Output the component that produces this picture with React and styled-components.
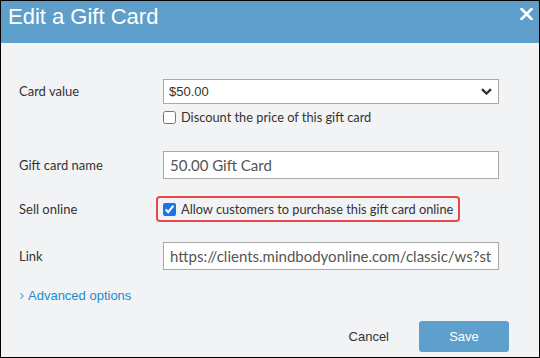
import React from 'react'
import styled, { createGlobalStyle } from 'styled-components'

const GlobalStyle = createGlobalStyle`
  * { box-sizing: border-box; }
  body {
    margin: 0;
    background: #fff;
    font-family: Lato, "Liberation Sans", sans-serif;
  }
`

const Dialog = styled.div`
  width: 540px;
  height: 358px;
  border: 1px solid #000;
  background: #f2f3f5;
  display: flex;
  flex-direction: column;
`

const Header = styled.div`
  height: 42px;
  background: #5e9ecb;
  display: flex;
  justify-content: space-between;
  align-items: flex-start;
  padding: 3px 6px 0 7px;
`

const Title = styled.h1`
  margin: 0;
  font-family: "Liberation Sans", Arial, sans-serif;
  font-weight: normal;
  font-size: 22px;
  line-height: 26px;
  color: #fff;
`

const CloseButton = styled.button`
  margin-top: 4px;
  padding: 0;
  border: none;
  background: none;
  width: 13px;
  height: 12px;
  display: flex;
  cursor: pointer;
`

const Body = styled.div`
  flex: 1;
  padding: 36px 40px 0 18px;
  display: flex;
  flex-direction: column;
`

const Row = styled.div`
  display: flex;
  align-items: ${p => p.$top ? 'flex-start' : 'center'};
  margin-top: ${p => p.$gap || 0}px;
`

const Label = styled.div`
  width: 144px;
  flex-shrink: 0;
  font-size: 13px;
  line-height: ${p => p.$height || 16}px;
  color: #333;
`

const Field = styled.div`
  flex: 1;
  min-width: 0;
`

const SelectBox = styled.div`
  height: 25px;
  border: 1px solid #a9a9a9;
  background: #fff;
  display: flex;
  align-items: center;
  justify-content: space-between;
  padding: 0 6px 0 5px;
  font-family: "Liberation Sans", Arial, sans-serif;
  font-size: 13px;
  color: #333;
  cursor: pointer;
`

const TextInput = styled.input`
  display: block;
  width: 100%;
  height: 28px;
  margin: 0;
  border: 1px solid #a9a9a9;
  background: #fff;
  padding: 0 6px;
  font-family: Lato, "Liberation Sans", sans-serif;
  font-size: 15px;
  color: #555;
  outline: none;
`

const CheckLine = styled.label`
  display: flex;
  align-items: center;
  gap: 5px;
  height: 14px;
  margin-top: ${p => p.$gap || 0}px;
  font-size: 12.8px;
  color: #333;
  cursor: pointer;

  input {
    margin: 0;
    width: 13px;
    height: 13px;
    accent-color: #1a73e8;
  }
`

const Highlight = styled.div`
  width: fit-content;
  height: 26px;
  margin-left: -7px;
  padding: 0 5px;
  border: 2px solid #e8474b;
  border-radius: 4px;
  display: flex;
  align-items: center;
`

const AdvancedLink = styled.a`
  margin-top: 18px;
  display: flex;
  align-items: center;
  gap: 4px;
  padding-left: 1px;
  width: fit-content;
  font-family: "Liberation Sans", Arial, sans-serif;
  font-size: 13px;
  line-height: 16px;
  color: #1b8bd0;
  text-decoration: none;
  cursor: pointer;
`

const Footer = styled.div`
  margin-top: 17px;
  margin-right: -10px;
  display: flex;
  justify-content: flex-end;
  align-items: center;
  gap: 30px;
`

const Button = styled.button`
  height: 31px;
  padding: 0;
  border: none;
  border-radius: 3px;
  font-family: "Liberation Sans", Arial, sans-serif;
  font-size: 13px;
  cursor: pointer;
  width: ${p => p.$primary ? '90px' : 'auto'};
  background: ${p => p.$primary ? '#5f9fcb' : 'transparent'};
  color: ${p => p.$primary ? '#fff' : '#333'};
`

function App() {
  return (
    <>
      <GlobalStyle />
      <Dialog>
        <Header>
          <Title>Edit a Gift Card</Title>
          <CloseButton aria-label="Close">
            <svg width="13" height="12" viewBox="0 0 13 12">
              <path d="M1.5 1L11.5 11M11.5 1L1.5 11" stroke="#fff" strokeWidth="2.6" strokeLinecap="square" />
            </svg>
          </CloseButton>
        </Header>
        <Body>
          <Row $top>
            <Label $height={25}>Card value</Label>
            <Field>
              <SelectBox>
                <span>$50.00</span>
                <svg width="11" height="7" viewBox="0 0 11 7">
                  <path d="M1 1.2L5.5 5.5L10 1.2" fill="none" stroke="#333" strokeWidth="2.4" />
                </svg>
              </SelectBox>
              <CheckLine $gap={6}>
                <input type="checkbox" />
                Discount the price of this gift card
              </CheckLine>
            </Field>
          </Row>
          <Row $gap={27}>
            <Label>Gift card name</Label>
            <Field>
              <TextInput readOnly value="50.00 Gift Card" />
            </Field>
          </Row>
          <Row $gap={17}>
            <Label>Sell online</Label>
            <Field>
              <Highlight>
                <CheckLine>
                  <input type="checkbox" defaultChecked />
                  Allow customers to purchase this gift card online
                </CheckLine>
              </Highlight>
            </Field>
          </Row>
          <Row $gap={20}>
            <Label>Link</Label>
            <Field>
              <TextInput readOnly value="https://clients.mindbodyonline.com/classic/ws?studioid=0&stype=42&prodId=101" />
            </Field>
          </Row>
          <AdvancedLink>
            <svg width="4" height="6" viewBox="0 0 4 6">
              <path d="M0.5 0.5L3.3 3L0.5 5.5" fill="none" stroke="#1b8bd0" strokeWidth="1" />
            </svg>
            Advanced options
          </AdvancedLink>
          <Footer>
            <Button>Cancel</Button>
            <Button $primary>Save</Button>
          </Footer>
        </Body>
      </Dialog>
    </>
  )
}

export default App
